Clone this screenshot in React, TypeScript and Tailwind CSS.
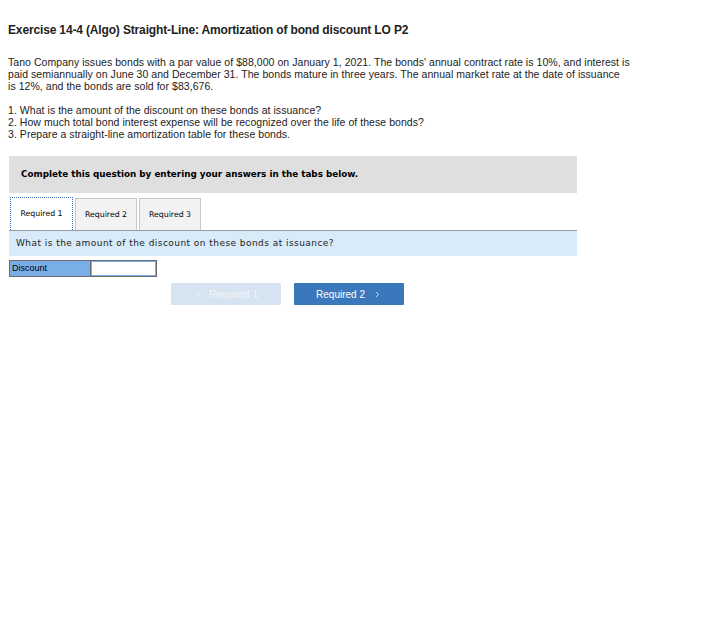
import { ChevronLeft, ChevronRight } from 'lucide-react';

export default function App() {
  return (
    <div className="min-h-screen bg-white text-black font-['Liberation_Sans',Arial,sans-serif]">
      <div className="pl-2 pt-[23px]">
        {/* Encabezado */}
        <h1 className="text-[12px] leading-[15px] font-bold tracking-[-0.15px] text-[#222]">
          Exercise 14-4 (Algo) Straight-Line: Amortization of bond discount LO P2
        </h1>

        <p className="mt-[18px] text-[10.5px] leading-[12px] tracking-[0.05px] text-[#222]">
          Tano Company issues bonds with a par value of $88,000 on January 1, 2021. The bonds' annual contract rate is 10%, and interest is
          <br />
          paid semiannually on June 30 and December 31. The bonds mature in three years. The annual market rate at the date of issuance
          <br />
          is 12%, and the bonds are sold for $83,676.
        </p>

        <ol className="mt-3 text-[10.5px] leading-[12px] tracking-[0.05px] text-[#222]">
          <li>1. What is the amount of the discount on these bonds at issuance?</li>
          <li>2. How much total bond interest expense will be recognized over the life of these bonds?</li>
          <li>3. Prepare a straight-line amortization table for these bonds.</li>
        </ol>
      </div>

      <div className="ml-[9px] mt-4 w-[568px]">
        <div className="h-[37px] bg-[#dfdfdf] pl-3 flex items-center">
          <span className="font-['DejaVu_Sans',Verdana,sans-serif] font-bold text-[8.8px] text-black">
            Complete this question by entering your answers in the tabs below.
          </span>
        </div>

        {/* Tabs */}
        <div className="mt-[4px] flex items-end gap-[2px] border-b border-[#999] pl-px font-['DejaVu_Sans',Verdana,sans-serif] text-[7.8px] text-black">
          <div className="h-[33px] w-[63px] flex items-center justify-center bg-white border border-dotted border-[#3a6fb5] border-b-0">
            Required 1
          </div>
          <div className="h-[32px] w-[62px] flex items-center justify-center bg-[#f2f2f2] border border-[#c8c8c8] border-b-0">
            Required 2
          </div>
          <div className="h-[32px] w-[62px] flex items-center justify-center bg-[#f2f2f2] border border-[#c8c8c8] border-b-0">
            Required 3
          </div>
        </div>

        <div className="h-[25px] bg-[#d9ebf9] pl-[7px] flex items-center">
          <span className="font-['DejaVu_Sans',Verdana,sans-serif] text-[9px] tracking-[0.45px] text-[#222]">
            What is the amount of the discount on these bonds at issuance?
          </span>
        </div>

        {/* Discount row */}
        <div className="mt-[4px] flex h-[17px] w-[148px] border border-[#6b6b6b]">
          <div className="w-[81px] bg-[#7aaee6] border-r border-[#6b6b6b] pl-[2px] flex items-center text-[9px] text-black">
            Discount
          </div>
          <input className="flex-1 min-w-0 bg-white border border-[#7aaee6] outline-none text-[9px] px-1" />
        </div>

        {/* Navigation */}
        <div className="mt-[6px] ml-[162px] flex gap-[13px]">
          <button className="h-[22px] w-[110px] bg-[#d6e3f1] rounded-[1px] flex items-center justify-center gap-[6px] text-[10px] text-[#f3f6fa]">
            <ChevronLeft className="h-[9px] w-[9px]" strokeWidth={2} />
            Required 1
          </button>
          <button className="h-[22px] w-[110px] bg-[#3a77bb] rounded-[1px] flex items-center justify-center gap-[8px] text-[10px] text-white">
            Required 2
            <ChevronRight className="h-[9px] w-[9px]" strokeWidth={2} />
          </button>
        </div>
      </div>
    </div>
  );
}
